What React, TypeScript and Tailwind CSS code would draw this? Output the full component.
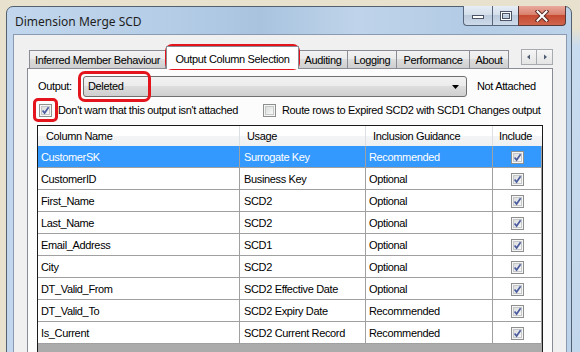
import React from 'react';

const rows = [
  ['CustomerSK', 'Surrogate Key', 'Recommended'],
  ['CustomerID', 'Business Key', 'Optional'],
  ['First_Name', 'SCD2', 'Optional'],
  ['Last_Name', 'SCD2', 'Optional'],
  ['Email_Address', 'SCD1', 'Optional'],
  ['City', 'SCD2', 'Optional'],
  ['DT_Valid_From', 'SCD2 Effective Date', 'Optional'],
  ['DT_Valid_To', 'SCD2 Expiry Date', 'Recommended'],
  ['Is_Current', 'SCD2 Current Record', 'Recommended'],
];

const tabs = ['Auditing', 'Logging', 'Performance', 'About'];
const tabWidths = ['w-[49px]', 'w-[49px]', 'w-[73px]', 'w-[39px]'];

const CheckBox = ({ checked = true }: { checked?: boolean }) => (
  <svg width="13" height="13" viewBox="0 0 13 13" className="shrink-0">
    <defs>
      <linearGradient id="cbfill" x1="0" y1="0" x2="1" y2="1">
        <stop offset="0" stopColor="#d9dadb" />
        <stop offset="1" stopColor="#fbfbfb" />
      </linearGradient>
    </defs>
    <rect x="0.5" y="0.5" width="12" height="12" fill="#f5f5f5" stroke="#8e8f8f" />
    <rect x="2.5" y="2.5" width="8" height="8" fill="url(#cbfill)" stroke="#c6c7c8" />
    {checked && (
      <path d="M3.6 6.4 L5.6 9 L9.6 3.2" fill="none" stroke="#4b5d9e" strokeWidth="1.7" />
    )}
  </svg>
);

const TitleButton = ({ kind }: { kind: 'min' | 'max' | 'close' }) => {
  if (kind === 'close') {
    return (
      <div className="flex w-[48px] items-center justify-center rounded-br-[4px] border border-t-0 border-[#5a3a36] bg-[linear-gradient(#e9a99c,#d9806e_45%,#c74a33_50%,#d0664d)]">
        <svg width="14" height="12" viewBox="0 0 14 12">
          <path d="M2.5 1.5 L11.5 10.5 M11.5 1.5 L2.5 10.5" stroke="#5a2a24" strokeWidth="4" strokeLinecap="square" />
          <path d="M2.5 1.5 L11.5 10.5 M11.5 1.5 L2.5 10.5" stroke="#ffffff" strokeWidth="2" strokeLinecap="square" />
        </svg>
      </div>
    );
  }
  return (
    <div
      className={
        kind === 'min'
          ? 'flex w-[29px] items-center justify-center rounded-bl-[4px] border border-t-0 border-r-0 border-[#56657a] bg-[linear-gradient(#e6edf5,#d4dfeb_45%,#bccbdc_50%,#cddaea)]'
          : 'flex w-[26px] items-center justify-center border border-t-0 border-r-0 border-[#56657a] bg-[linear-gradient(#e6edf5,#d4dfeb_45%,#bccbdc_50%,#cddaea)]'
      }
    >
      {kind === 'min' ? (
        <svg width="14" height="8" viewBox="0 0 14 8">
          <rect x="1.5" y="3.5" width="11" height="3" fill="#ffffff" stroke="#4a5466" />
        </svg>
      ) : (
        <svg width="12" height="10" viewBox="0 0 12 10">
          <rect x="1.5" y="1.5" width="9" height="7" fill="none" stroke="#4a5466" strokeWidth="3" />
          <rect x="1.5" y="1.5" width="9" height="7" fill="none" stroke="#ffffff" strokeWidth="1" />
        </svg>
      )}
    </div>
  );
};

export default function App() {
  return (
    <div className="relative flex h-[352px] w-[580px] overflow-hidden bg-[#e8e1cd] pl-[6px] pt-[6px] font-['Liberation_Sans',Arial,sans-serif] text-[11px] leading-none tracking-[-0.35px] text-black">
      {/* Window frame */}
      <div className="flex h-[360px] w-[566px] shrink-0 flex-col rounded-t-[7px] border border-[#52606f] bg-[linear-gradient(90deg,#c2d7ed_0%,#b4cce6_30%,#a9c3df_45%,#bfd4ea_62%,#b3cbe5_82%,#bdd3ea_100%)]">
        {/* Title bar */}
        <div className="flex h-[27px] shrink-0 items-start justify-between">
          <div className="pl-[8px] pt-[8px] font-['Noto_Sans',sans-serif] text-[12px] leading-[14px] tracking-normal text-[#1e1e1e]">
            Dimension Merge SCD
          </div>
          <div className="-mt-px mr-[5px] flex h-[20px]">
            <TitleButton kind="min" />
            <TitleButton kind="max" />
            <TitleButton kind="close" />
          </div>
        </div>

        {/* Client area */}
        <div className="ml-[6px] mr-[4px] flex flex-1 flex-col border border-[#8a9bb1] bg-[#f0f0f0] pl-[13px] pt-[11px]">
          {/* Tab strip */}
          <div className="flex h-[22px] w-[526px] shrink-0 items-end">
            <div className="ml-[2px] flex h-[18px] w-[137px] items-center justify-center border border-b-0 border-[#898c95] bg-[linear-gradient(#f2f2f2,#ebebeb_50%,#dddddd_50%,#cfcfcf)] pt-px">
              Inferred Member Behaviour
            </div>
            <div className="relative z-10 -mb-px flex h-[23px] w-[133px] items-start justify-center border border-b-0 border-[#898c95] bg-[#ffffff] pt-[7px]">
              Output Column Selection
            </div>
            {tabs.map((t, i) => (
              <div
                key={t}
                className={`${tabWidths[i]} flex h-[18px] items-center justify-center border border-b-0 border-l-0 border-[#898c95] bg-[linear-gradient(#f2f2f2,#ebebeb_50%,#dddddd_50%,#cfcfcf)] pt-px`}
              >
                {t}
              </div>
            ))}
            <div className="mb-[3px] ml-auto flex self-end">
              <div className="flex h-[16px] w-[16px] items-center justify-center border border-[#a7abb0] bg-[linear-gradient(#f6f6f6,#e4e4e4)]">
                <svg width="6" height="6" viewBox="0 0 6 6">
                  <path d="M4 0.5 L1 3 L4 5.5 Z" fill="#4d5c73" />
                </svg>
              </div>
              <div className="flex h-[16px] w-[16px] items-center justify-center border border-l-0 border-[#a7abb0] bg-[linear-gradient(#f6f6f6,#e4e4e4)]">
                <svg width="6" height="6" viewBox="0 0 6 6">
                  <path d="M2 0.5 L5 3 L2 5.5 Z" fill="#4d5c73" />
                </svg>
              </div>
            </div>
          </div>

          {/* Tab page */}
          <div className="flex w-[526px] flex-1 flex-col border border-[#898c95] bg-[#fcfcfc] pl-[9px] pt-[7px]">
            <div className="flex h-[21px] items-center">
              <span className="ml-[1px] w-[45px]">Output:</span>
              <div className="flex h-[21px] w-[384px] items-center justify-between rounded-[3px] border border-[#707070] bg-[linear-gradient(#f2f2f2,#ebebeb_50%,#dddddd_50%,#cfcfcf)] pl-[4px] pr-[7px]">
                <span>Deleted</span>
                <svg width="7" height="4" viewBox="0 0 7 4">
                  <path d="M0 0 L7 0 L3.5 4 Z" fill="#000000" />
                </svg>
              </div>
              <span className="ml-[10px]">Not Attached</span>
            </div>

            <div className="mt-[7px] flex h-[13px] items-center">
              <div className="ml-[2px] flex w-[224px] items-center gap-[6px]">
                <CheckBox />
                <span className="whitespace-nowrap">Don't wam that this output isn't attached</span>
              </div>
              <div className="flex items-center gap-[6px]">
                <CheckBox checked={false} />
                <span className="whitespace-nowrap">Route rows to Expired SCD2 with SCD1 Changes output</span>
              </div>
            </div>

            {/* Grid */}
            <div className="mt-[8px] flex w-[506px] flex-1 flex-col border border-[#1a1a1a] bg-[#ababab]">
              <div className="grid h-[20px] grid-cols-[202px_126px_127px_49px] bg-[linear-gradient(#ffffff,#ffffff_50%,#f4f5f7_50%,#eef0f2)]">
                <div className="flex items-center border-r border-[#dcdfe3] pl-[8px]">Column Name</div>
                <div className="flex items-center border-r border-[#dcdfe3] pl-[7px]">Usage</div>
                <div className="flex items-center border-r border-[#dcdfe3] pl-[7px]">Inclusion Guidance</div>
                <div className="flex items-center pl-[6px]">Include</div>
              </div>
              {rows.map((r, i) => {
                const sel = i === 0;
                const cell = `flex h-[22px] items-center border-b border-r border-[#a0a0a0] pt-px ${sel ? 'bg-[#3399ff] text-white' : 'bg-white'}`;
                return (
                  <div key={r[0]} className="grid grid-cols-[202px_126px_127px_49px]">
                    <div className={`${cell} pl-[3px]`}>{r[0]}</div>
                    <div className={`${cell} pl-[4px]`}>{r[1]}</div>
                    <div className={`${cell} pl-[3px]`}>{r[2]}</div>
                    <div className={`${cell} justify-center`}>
                      <CheckBox />
                    </div>
                  </div>
                );
              })}
            </div>
          </div>
        </div>
      </div>

      {/* Glass edge of the desktop to the right of the window */}
      <div className="h-full flex-1 bg-[linear-gradient(#e8e1cd_0px,#e8e1cd_22px,#c9dbee_40px,#c3d7ec_100%)]" />

      {/* Red callout outlines */}
      <div className="absolute left-[165px] top-[44px] h-[26px] w-[135px] rounded-[7px] border-[3px] border-[#e4141d]" />
      <div className="absolute left-[78px] top-[71px] h-[31px] w-[73px] rounded-[7px] border-[3px] border-[#e4141d]" />
      <div className="absolute left-[33px] top-[98px] h-[24px] w-[25px] rounded-[5px] border-[3px] border-[#e4141d]" />
    </div>
  );
}
